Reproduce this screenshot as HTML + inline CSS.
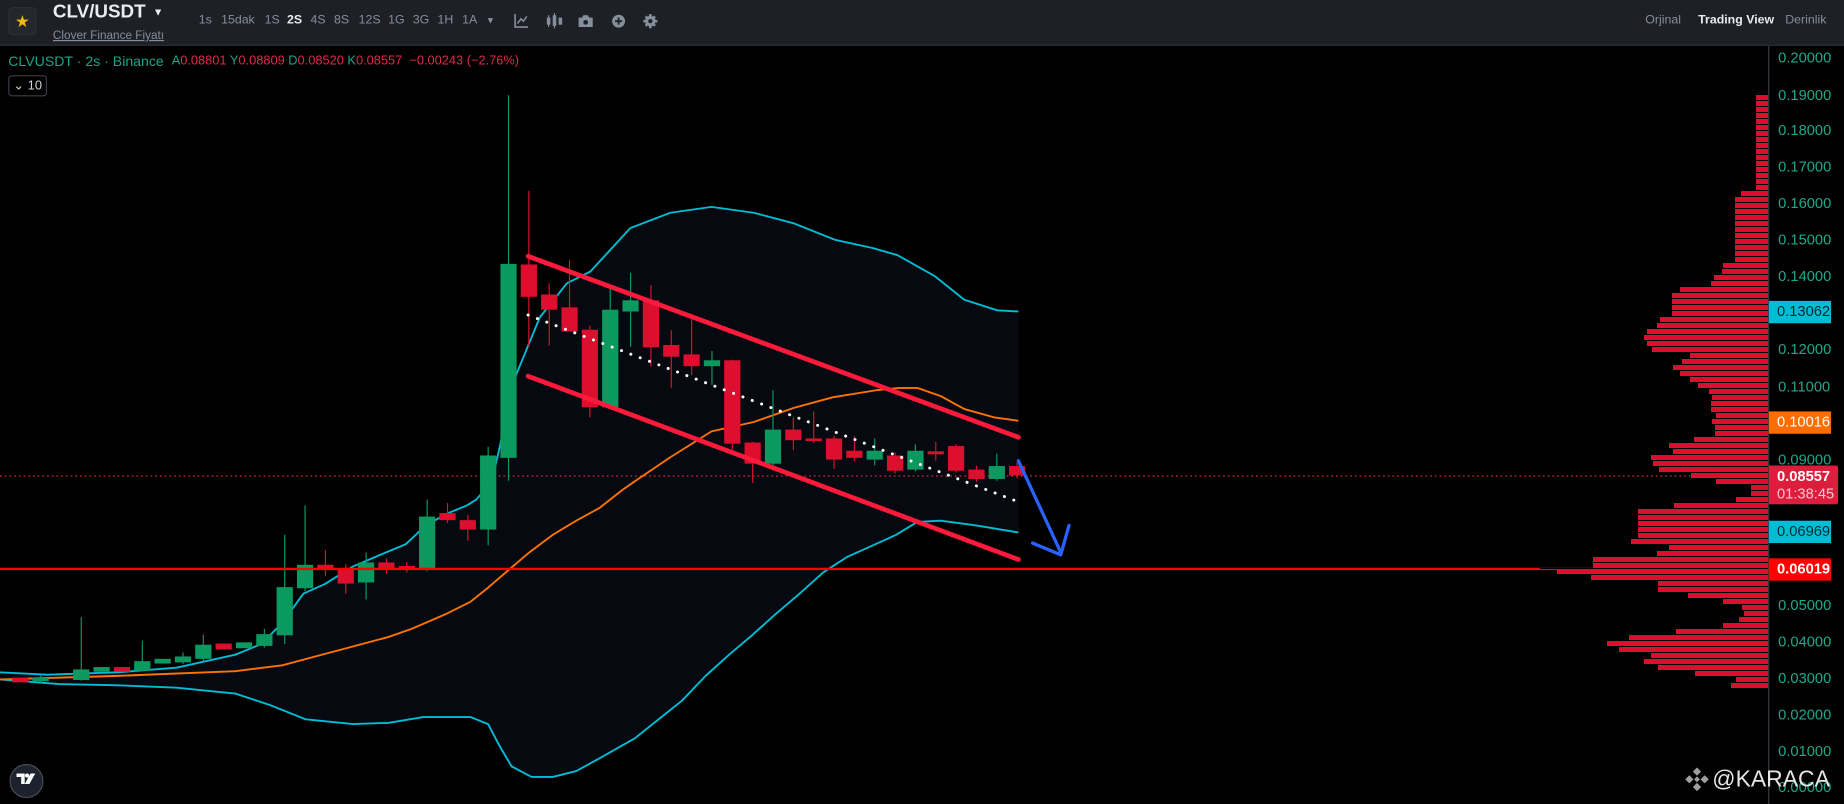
<!DOCTYPE html>
<html><head><meta charset="utf-8"><style>
html,body{margin:0;padding:0;background:#000;width:1844px;height:804px;overflow:hidden}
#w{position:absolute;left:0;top:0;width:1568px;height:684px;transform:scale(1.17602,1.17544);transform-origin:0 0;font-family:"Liberation Sans",sans-serif}
.a{position:absolute;white-space:nowrap}
.top{position:absolute;left:0;top:0;width:1568px;height:37.5px;background:#1e2026;border-bottom:1px solid #2b2f36}
.tf{position:absolute;top:11px;font-size:10.5px;color:#848e9c}
.ax{position:absolute;left:1512px;font-size:12.5px;color:#1fa88c;transform:translateY(-50%)}
.bx{position:absolute;left:1504px;width:53px;height:19px;font-size:12.5px;line-height:19px;padding-left:7px;box-sizing:border-box}
</style></head><body>
<svg style="position:absolute;left:0;top:0" width="1844" height="804" viewBox="0 0 1568 684" preserveAspectRatio="none">
<polygon fill="#060a10" points="0,572 40,574 100,572 150,568 200,557 222,548 240,530 258,505 276,497 300,482 328,470 345,463 362,447 380,437 397,430 405,425 418,410 425,380 432,345 438,321 459,270 482,241 502,231 536,194 570,181 605,176 641,181 675,190 710,204 742,211 763,217 795,235 820,255 848,264 866,265 866,453 830,447 800,443 780,444 762,455 740,465 720,474 700,487 680,505 660,522 640,540 620,557 600,575 580,596 560,612 540,628 510,645 490,656 470,661 452,661 435,652 425,635 415,616 400,610 360,610 330,615 300,616 260,612 230,600 200,590 150,585 100,583 50,582 0,578"/>
<line x1="0" y1="405" x2="1504" y2="405" stroke="#e0294a" stroke-width="1" stroke-dasharray="1.5 2.5"/>
<g fill="none" stroke-width="1.6" stroke-linejoin="round">
<polyline stroke="#00bcd4" points="0,572 40,574 100,572 150,568 200,557 222,548 240,530 258,505 276,497 300,482 328,470 345,463 362,447 380,437 397,430 405,425 418,410 425,380 432,345 438,321 459,270 482,241 502,231 536,194 570,181 605,176 641,181 675,190 710,204 742,211 763,217 795,235 820,255 848,264 866,265"/>
<polyline stroke="#00bcd4" points="0,578 50,582 100,583 150,585 200,590 230,600 260,612 300,616 330,615 360,610 400,610 415,616 425,635 435,652 452,661 470,661 490,656 510,645 540,628 560,612 580,596 600,575 620,557 640,540 660,522 680,505 700,487 720,474 740,465 762,455 780,444 800,443 830,447 866,453"/>
<polyline stroke="#ff7300" points="0,578 100,575 200,571 240,566 270,558 300,550 330,542 350,535 380,522 400,512 415,500 430,487 450,470 470,455 490,443 510,432 529,417 539,410 570,389 605,367 641,359 675,347 708,338 745,332 765,330 780,330 800,337 820,348 845,355 866,358"/>
</g>
<g stroke-width="1">
<g stroke="#0c9960" fill="#0c9960">
<line x1="34.5" y1="575" x2="34.5" y2="581"/><rect x="28.1" y="577" width="12.8" height="2"/>
<line x1="69.1" y1="525" x2="69.1" y2="579"/><rect x="62.7" y="570" width="12.8" height="8"/>
<rect x="80" y="568" width="12.8" height="3"/>
<line x1="121" y1="545" x2="121" y2="571"/><rect x="114.6" y="563" width="12.8" height="7"/>
<rect x="131.9" y="561" width="12.8" height="3"/>
<line x1="155.6" y1="555" x2="155.6" y2="565"/><rect x="149.2" y="559" width="12.8" height="4"/>
<line x1="172.9" y1="540" x2="172.9" y2="562"/><rect x="166.5" y="549" width="12.8" height="11"/>
<rect x="201.1" y="547" width="12.8" height="4"/>
<line x1="224.8" y1="535" x2="224.8" y2="551"/><rect x="218.4" y="540" width="12.8" height="9"/>
<line x1="242.1" y1="455" x2="242.1" y2="548"/><rect x="235.7" y="500" width="12.8" height="40"/>
<line x1="259.4" y1="430" x2="259.4" y2="503"/><rect x="253" y="481" width="12.8" height="19"/>
<line x1="311.3" y1="470" x2="311.3" y2="510"/><rect x="304.9" y="479" width="12.8" height="16"/>
<line x1="363.2" y1="425" x2="363.2" y2="486"/><rect x="356.8" y="440" width="12.8" height="44"/>
<line x1="415.1" y1="380" x2="415.1" y2="464"/><rect x="408.7" y="388" width="12.8" height="62"/>
<line x1="432.4" y1="81" x2="432.4" y2="409"/><rect x="426" y="225" width="12.8" height="164"/>
<line x1="518.9" y1="243" x2="518.9" y2="348"/><rect x="512.5" y="264" width="12.8" height="82"/>
<line x1="536.2" y1="232" x2="536.2" y2="295"/><rect x="529.8" y="256" width="12.8" height="8.5"/>
<line x1="605.4" y1="298.6" x2="605.4" y2="327.5"/><rect x="599" y="307" width="12.8" height="4"/>
<line x1="657.3" y1="332" x2="657.3" y2="400"/><rect x="650.9" y="366" width="12.8" height="28"/>
<line x1="743.8" y1="373" x2="743.8" y2="396"/><rect x="737.4" y="384" width="12.8" height="6.5"/>
<line x1="778.4" y1="378" x2="778.4" y2="401"/><rect x="772" y="384" width="12.8" height="15"/>
<line x1="847.6" y1="386" x2="847.6" y2="409"/><rect x="841.2" y="397" width="12.8" height="10"/>
</g>
<g stroke="#dc0f2e" fill="#dc0f2e">
<rect x="10.8" y="577" width="12.8" height="3"/>
<rect x="97.3" y="568" width="12.8" height="3"/>
<rect x="183.8" y="548" width="12.8" height="4"/>
<line x1="276.7" y1="468" x2="276.7" y2="490"/><rect x="270.3" y="481" width="12.8" height="3"/>
<line x1="294" y1="480" x2="294" y2="505"/><rect x="287.6" y="485" width="12.8" height="11"/>
<line x1="328.6" y1="475" x2="328.6" y2="488"/><rect x="322.2" y="479" width="12.8" height="4"/>
<line x1="345.9" y1="478" x2="345.9" y2="487"/><rect x="339.5" y="482" width="12.8" height="2"/>
<line x1="380.5" y1="428" x2="380.5" y2="445"/><rect x="374.1" y="437" width="12.8" height="5"/>
<line x1="397.8" y1="438" x2="397.8" y2="460"/><rect x="391.4" y="443" width="12.8" height="7"/>
<line x1="449.7" y1="162.5" x2="449.7" y2="295"/><rect x="443.3" y="225.5" width="12.8" height="26.5"/>
<line x1="467" y1="241" x2="467" y2="294"/><rect x="460.6" y="251" width="12.8" height="12"/>
<line x1="484.3" y1="221" x2="484.3" y2="282"/><rect x="477.9" y="262" width="12.8" height="19.6"/>
<line x1="501.6" y1="277" x2="501.6" y2="355"/><rect x="495.2" y="281" width="12.8" height="65"/>
<line x1="553.5" y1="242.5" x2="553.5" y2="312"/><rect x="547.1" y="256" width="12.8" height="39"/>
<line x1="570.8" y1="281" x2="570.8" y2="330"/><rect x="564.4" y="294" width="12.8" height="9"/>
<line x1="588.1" y1="267" x2="588.1" y2="319"/><rect x="581.7" y="302" width="12.8" height="9"/>
<line x1="622.7" y1="306" x2="622.7" y2="383"/><rect x="616.3" y="307" width="12.8" height="70"/>
<line x1="640" y1="376" x2="640" y2="411"/><rect x="633.6" y="377" width="12.8" height="17"/>
<line x1="674.6" y1="355" x2="674.6" y2="383"/><rect x="668.2" y="366" width="12.8" height="8"/>
<line x1="691.9" y1="350" x2="691.9" y2="377"/><rect x="685.5" y="373.5" width="12.8" height="1.2"/>
<line x1="709.2" y1="371" x2="709.2" y2="399"/><rect x="702.8" y="373.5" width="12.8" height="17"/>
<line x1="726.5" y1="371" x2="726.5" y2="392"/><rect x="720.1" y="384" width="12.8" height="5"/>
<line x1="761.1" y1="385" x2="761.1" y2="403"/><rect x="754.7" y="388" width="12.8" height="12"/>
<line x1="795.7" y1="376" x2="795.7" y2="392"/><rect x="789.3" y="384.5" width="12.8" height="1.5"/>
<line x1="813" y1="378" x2="813" y2="402"/><rect x="806.6" y="380" width="12.8" height="20"/>
<line x1="830.3" y1="396" x2="830.3" y2="410"/><rect x="823.9" y="400" width="12.8" height="7"/>
<line x1="864.9" y1="393" x2="864.9" y2="407"/><rect x="858.5" y="397" width="12.8" height="7"/>
</g></g>
<line x1="449" y1="218" x2="866" y2="372" stroke="#ff1a3c" stroke-width="4" stroke-linecap="round"/>
<line x1="449" y1="320" x2="866" y2="476" stroke="#ff1a3c" stroke-width="4" stroke-linecap="round"/>
<line x1="449" y1="268" x2="866" y2="427" stroke="#fff" stroke-width="2.5" stroke-dasharray="0.1 8.4" stroke-linecap="round"/>
<g stroke="#2962ff" stroke-width="2.8" fill="none" stroke-linecap="round" stroke-linejoin="round"><path d="M866 392 L902 470"/><path d="M878 462 L902 472 L909 447"/></g>
<line x1="0" y1="484" x2="1504" y2="484" stroke="#ff0000" stroke-width="2"/>
<line x1="1504" y1="38" x2="1504" y2="684" stroke="#3a3e46" stroke-width="1"/>
</svg>
<svg style="position:absolute;left:0;top:0" width="1844" height="804">
<defs><pattern id="gp" patternUnits="userSpaceOnUse" x="0" y="95" width="10" height="6"><rect x="0" y="5" width="10" height="1" fill="#000"/></pattern></defs>
<path fill="#dc0f2e" d="M1756 95H1768V191H1756Z M1741 191H1768V197H1741Z M1735 197H1768V263H1735Z M1723 263h45v6h-45Z M1722 269h46v6h-46Z M1714 275h54v6h-54Z M1711 281h57v6h-57Z M1680 287h88v6h-88Z M1672 293h96v24h-96Z M1660 317h108v6h-108Z M1657 323h111v6h-111Z M1647 329h121v6h-121Z M1644 335h124v6h-124Z M1647 341h121v6h-121Z M1652 347h116v6h-116Z M1690 353h78v6h-78Z M1682 359h86v6h-86Z M1673 365h95v6h-95Z M1680 371h88v6h-88Z M1690 377h78v6h-78Z M1698 383h70v6h-70Z M1709 389h59v6h-59Z M1712 395h56v6h-56Z M1711 401h57v12h-57Z M1716 413h52v6h-52Z M1712 419h56v6h-56Z M1715 425h53v12h-53Z M1694 437h74v6h-74Z M1669 443h99v6h-99Z M1673 449h95v6h-95Z M1651 455h117v6h-117Z M1653 461h115v6h-115Z M1659 467h109v6h-109Z M1691 473h77v6h-77Z M1716 479h52v6h-52Z M1751 485h17v12h-17Z M1736 497h32v6h-32Z M1674 503h94v6h-94Z M1638 509h130v30h-130Z M1631 539h137v6h-137Z M1669 545h99v6h-99Z M1657 551h111v6h-111Z M1593 557h175v12h-175Z M1557 569h211v6h-211Z M1591 575h177v6h-177Z M1658 581h110v12h-110Z M1688 593h80v6h-80Z M1723 599h45v6h-45Z M1742 605h26v6h-26Z M1744 611h24v6h-24Z M1739 617h29v6h-29Z M1723 623h45v6h-45Z M1676 629h92v6h-92Z M1629 635h139v6h-139Z M1607 641h161v6h-161Z M1619 647h149v6h-149Z M1651 653h117v6h-117Z M1644 659h124v6h-124Z M1658 665h110v6h-110Z M1695 671h73v6h-73Z M1736 677h32v6h-32Z M1731 683h37v6h-37Z"/>
<rect x="1540" y="95" width="228" height="595" fill="url(#gp)"/>
</svg>
<div id="w">
<div class="top"></div>
<div class="a" style="left:7px;top:6px;width:22px;height:22px;border:1px solid #2b2f36;border-radius:4px;background:#24272d;color:#f0b90b;font-size:14px;line-height:22px;text-align:center">★</div>
<div class="a" style="left:45px;top:2px;font-size:16px;font-weight:bold;color:#eaecef">CLV/USDT</div>
<div class="a" style="left:130px;top:5px;font-size:9px;color:#eaecef">▼</div>
<div class="a" style="left:45px;top:25px;font-size:10px;color:#848e9c;text-decoration:underline">Clover Finance Fiyatı</div>
<div class="tf" style="left:169px">1s</div><div class="tf" style="left:188px">15dak</div><div class="tf" style="left:225px">1S</div><div class="tf" style="left:244px;color:#eaecef;font-weight:bold">2S</div><div class="tf" style="left:264px">4S</div><div class="tf" style="left:284px">8S</div><div class="tf" style="left:305px">12S</div><div class="tf" style="left:330px">1G</div><div class="tf" style="left:351px">3G</div><div class="tf" style="left:372px">1H</div><div class="tf" style="left:393px">1A</div><div class="tf" style="left:413px;font-size:8px;top:13px">▼</div>
<svg class="a" style="left:437px;top:11px" width="125" height="14" fill="#848e9c" stroke="#848e9c">
<path d="M1 1V12H12" fill="none" stroke-width="1.4"/><path d="M3 9L6 5L8 7L11 3" fill="none" stroke-width="1.3"/>
<rect x="28" y="4" width="3" height="6" stroke="none"/><rect x="33" y="2" width="3" height="9" stroke="none"/><line x1="29.5" y1="2" x2="29.5" y2="12" stroke-width="1"/><line x1="34.5" y1="0" x2="34.5" y2="13" stroke-width="1"/><rect x="38" y="4" width="3" height="6" stroke="none"/>
<path d="M55 4h3l1-2h4l1 2h3v8h-12Z" stroke="none"/><circle cx="61" cy="8" r="2" fill="#1e2026" stroke="none"/>
<circle cx="89" cy="7" r="5.5" stroke="none"/><path d="M89 4v6M86 7h6" stroke="#1e2026" stroke-width="1.6"/>
<circle cx="116" cy="7" r="4.5" stroke="none"/><path d="M116 1v12M110 7h12M112 3l8 8M120 3l-8 8" stroke-width="2.2"/><circle cx="116" cy="7" r="1.8" fill="#1e2026" stroke="none"/>
</svg>
<div class="tf" style="left:1399px">Orjinal</div><div class="tf" style="left:1444px;color:#eaecef;font-weight:bold">Trading View</div><div class="tf" style="left:1518px">Derinlik</div>
<div class="a" style="left:7px;top:44.5px;font-size:12px;color:#1fa38a">CLVUSDT · 2s · Binance</div>
<div class="a" style="left:146px;top:45.5px;font-size:10.9px;color:#e0294a"><span style="color:#1fa38a">A</span>0.08801 <span style="color:#1fa38a">Y</span>0.08809 <span style="color:#1fa38a">D</span>0.08520 <span style="color:#1fa38a">K</span>0.08557 &nbsp;−0.00243 (−2.76%)</div>
<div class="a" style="left:7px;top:64px;width:31px;height:16px;border:1px solid #3a3e46;border-radius:3px;font-size:11px;color:#d1d4dc;line-height:16px;text-align:center">⌄ 10</div>
<div class="ax" style="top:49px">0.20000</div><div class="ax" style="top:81px">0.19000</div><div class="ax" style="top:111px">0.18000</div><div class="ax" style="top:142px">0.17000</div><div class="ax" style="top:173px">0.16000</div><div class="ax" style="top:204px">0.15000</div><div class="ax" style="top:235px">0.14000</div><div class="ax" style="top:297px">0.12000</div><div class="ax" style="top:329px">0.11000</div><div class="ax" style="top:391px">0.09000</div><div class="ax" style="top:515px">0.05000</div><div class="ax" style="top:546px">0.04000</div><div class="ax" style="top:577px">0.03000</div><div class="ax" style="top:608px">0.02000</div><div class="ax" style="top:639px">0.01000</div><div class="ax" style="top:670px">0.00000</div>
<div class="bx" style="top:256px;background:#00bcd4;color:#062a30">0.13062</div>
<div class="bx" style="top:350px;background:#ff6d00;color:#fff">0.10016</div>
<div class="bx" style="top:396px;height:33px;width:59px;background:#dc1e3c;color:#fff;line-height:15px;padding-top:2px;font-weight:bold;border-radius:0 2px 2px 0">0.08557<br><span style="font-weight:normal;color:#f3c6cf">01:38:45</span></div>
<div class="bx" style="top:443px;background:#00bcd4;color:#062a30">0.06969</div>
<div class="bx" style="top:475px;background:#ff0000;color:#fff;font-weight:bold">0.06019</div>
<div class="a" style="left:7.5px;top:649.5px;width:27px;height:27px;border:1px solid #4a4d57;border-radius:50%;background:#1e222d"></div>
<svg class="a" style="left:14px;top:658px" width="16" height="10" fill="#fff"><path d="M0 0h7v9h-3v-6h-4Z"/><circle cx="9" cy="1.8" r="1.8"/><path d="M12 0h4l-5 9h-4Z"/></svg>
<svg class="a" style="left:1432px;top:652px" width="22" height="22" fill="#bbb"><path d="M11 1l3.5 3.5-3.5 3.5-3.5-3.5Z M4.5 7.5l3.5 3.5-3.5 3.5-3.5-3.5Z M17.5 7.5l3.5 3.5-3.5 3.5-3.5-3.5Z M11 14l3.5 3.5-3.5 3.5-3.5-3.5Z M11 8.5l2.5 2.5-2.5 2.5-2.5-2.5Z" opacity=".85"/></svg>
<div class="a" style="left:1456px;top:652px;font-size:19.5px;color:#e6e6e6">@KARACA</div>
</div>
</body></html>
